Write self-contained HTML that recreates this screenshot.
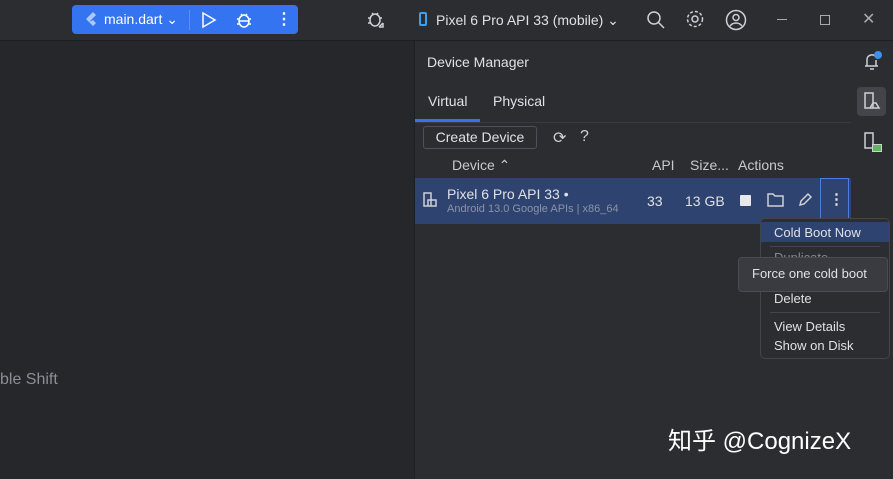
<!DOCTYPE html><html><head><style>
body{margin:0;width:893px;height:479px;background:#26272b;font-family:"Liberation Sans",sans-serif;color:#dfe1e5;position:relative;overflow:hidden;font-size:13px}
.a{position:absolute}
svg{position:absolute;fill:none;stroke:#ced0d6;stroke-width:1.5}
</style></head><body>
<div class="a" style="left:0;top:0;width:893px;height:40px;background:#2b2d30;border-bottom:1px solid #1e1f22"></div>
<div class="a" style="left:72px;top:5px;width:226px;height:29px;background:#3574f0;border-radius:4px"></div>
<svg style="left:84px;top:11px" width="14" height="18" viewBox="0 0 14 18"><path d="M9 1 L2 8 L5 11 L12 4Z M5 11 L9 15 L12 12 L9 9Z" fill="#a9c9ff" stroke="none"/></svg>
<div class="a" style="left:104px;top:11px;color:#fff;font-size:14px">main.dart ⌄</div>
<div class="a" style="left:189px;top:10px;width:1px;height:20px;background:#5f8ff0"></div>
<svg style="left:201px;top:11px" width="16" height="18" viewBox="0 0 16 18"><path d="M2 2 L14 9 L2 16Z" stroke="#fff"/></svg>
<svg style="left:235px;top:11px" width="18" height="18" viewBox="0 0 18 18"><ellipse cx="9" cy="10" rx="5" ry="6" stroke="#fff"/><path d="M2 8h3M13 8h3M2 13h3M13 13h3M6 3l2 2M12 3l-2 2M4 10h10" stroke="#fff"/></svg>
<div class="a" style="left:276px;top:9px;color:#fff;font-size:16px;font-weight:bold">⋮</div>
<svg style="left:366px;top:10px" width="20" height="20" viewBox="0 0 20 20"><ellipse cx="9" cy="10" rx="5" ry="6"/><path d="M2 8h3M13 8h3M2 13h3M6 3l2 2M12 3l-2 2M13 17l4-4M17 13v4h-4"/></svg>
<div class="a" style="left:419px;top:12px;width:8px;height:14px;border:2px solid #3d9ff0;border-radius:2px;box-sizing:border-box"></div>
<div class="a" style="left:436px;top:12px;font-size:14px">Pixel 6 Pro API 33 (mobile) ⌄</div>
<svg style="left:646px;top:10px" width="20" height="20" viewBox="0 0 20 20"><circle cx="8" cy="8" r="6"/><path d="M12.5 12.5 18 18"/></svg>
<svg style="left:685px;top:9px" width="20" height="20" viewBox="0 0 20 20"><circle cx="10" cy="10" r="3"/><circle cx="10" cy="10" r="7.5" stroke-dasharray="3 2"/></svg>
<svg style="left:725px;top:9px" width="22" height="22" viewBox="0 0 22 22"><circle cx="11" cy="11" r="9.5"/><circle cx="11" cy="8.5" r="3"/><path d="M5 17c3-4 9-4 12 0"/></svg>
<div class="a" style="left:777px;top:19px;width:10px;height:1px;background:#aaa"></div>
<div class="a" style="left:820px;top:15px;width:8px;height:8px;border:1px solid #aaa"></div>
<div class="a" style="left:862px;top:9px;color:#aaa;font-size:16px">✕</div>
<div class="a" style="left:0;top:371px;color:#8c8e94;font-size:16px">ble Shift</div>
<div class="a" style="left:414px;top:41px;width:437px;height:438px;background:#2b2d30;border-left:1px solid #1e1f22;border-right:1px solid #1e1f22"></div>
<div class="a" style="left:852px;top:41px;width:41px;height:438px;background:#2b2d30"></div>
<div class="a" style="left:427px;top:54px;font-size:14px">Device Manager</div>
<div class="a" style="left:428px;top:93px;font-size:14px">Virtual</div>
<div class="a" style="left:493px;top:93px;font-size:14px">Physical</div>
<div class="a" style="left:415px;top:119px;width:65px;height:3px;background:#3574f0"></div>
<div class="a" style="left:415px;top:122px;width:436px;height:1px;background:#393b40"></div>
<div class="a" style="left:423px;top:126px;width:114px;height:23px;border:1px solid #4e5157;border-radius:3px;box-sizing:border-box;text-align:center;line-height:21px;font-size:14px">Create Device</div>
<div class="a" style="left:553px;top:128px;font-size:16px;color:#ced0d6">⟳</div>
<div class="a" style="left:580px;top:128px;font-size:16px;color:#ced0d6">?</div>
<div class="a" style="left:452px;top:157px;font-size:14px;color:#c8c9cd">Device ⌃</div>
<div class="a" style="left:652px;top:157px;font-size:14px;color:#c8c9cd">API</div>
<div class="a" style="left:690px;top:157px;font-size:14px;color:#c8c9cd">Size...</div>
<div class="a" style="left:738px;top:157px;font-size:14px;color:#c8c9cd">Actions</div>
<div class="a" style="left:415px;top:178px;width:436px;height:46px;background:#2e4370"></div>
<div class="a" style="left:820px;top:178px;width:29px;height:45px;border:1px solid #4c7de0;box-sizing:border-box"></div>
<svg style="left:422px;top:192px" width="16" height="16" viewBox="0 0 16 16"><path d="M2 1h7v13H2Z M6 8h8v6H6Z"/></svg>
<div class="a" style="left:447px;top:186px;font-size:14px">Pixel 6 Pro API 33 •</div>
<div class="a" style="left:447px;top:203px;font-size:11px;color:#8a93a8">Android 13.0 Google APIs | x86_64</div>
<div class="a" style="left:647px;top:193px;font-size:14px">33</div>
<div class="a" style="left:685px;top:193px;font-size:14px">13 GB</div>
<div class="a" style="left:740px;top:195px;width:11px;height:11px;background:#e8e8ea;border-radius:1px"></div>
<svg style="left:767px;top:192px" width="17" height="15" viewBox="0 0 17 15"><path d="M1 2h5l2 2h8v10H1Z"/></svg>
<svg style="left:797px;top:192px" width="16" height="16" viewBox="0 0 16 16"><path d="M3 13 L4 9 L11 2 L14 5 L7 12Z"/></svg>
<div class="a" style="left:829px;top:190px;font-size:15px;font-weight:bold">⋮</div>
<svg style="left:861px;top:50px" width="22" height="22" viewBox="0 0 22 22"><path d="M4 16h13M6 16V9a5 5 0 0 1 9 -2M15 10v6M9 19h4"/></svg>
<div class="a" style="left:874px;top:51px;width:8px;height:8px;border-radius:50%;background:#3d8ff0"></div>
<div class="a" style="left:857px;top:87px;width:29px;height:29px;background:#43454a;border-radius:4px"></div>
<svg style="left:862px;top:92px" width="20" height="20" viewBox="0 0 20 20"><path d="M3 1h8v15H3Z M8 16l3-5 3 0 3 5Z"/></svg>
<svg style="left:862px;top:132px" width="20" height="20" viewBox="0 0 20 20"><path d="M3 1h8v15H3Z"/></svg>
<div class="a" style="left:872px;top:144px;width:8px;height:6px;background:#5fb85f;border:1px solid #ced0d6"></div>
<div class="a" style="left:760px;top:218px;width:130px;height:141px;background:#2b2d30;border:1px solid #43454a;border-radius:5px;box-sizing:border-box"></div>
<div class="a" style="left:761px;top:222px;width:128px;height:20px;background:#2e4370"></div>
<div class="a" style="left:774px;top:225px;font-size:13px">Cold Boot Now</div>
<div class="a" style="left:770px;top:246px;width:110px;height:1px;background:#43454a"></div>
<div class="a" style="left:774px;top:250px;font-size:13px;color:#888">Duplicate</div>
<div class="a" style="left:738px;top:257px;width:150px;height:35px;background:#393b40;border:1px solid #4a4c51;border-radius:4px;box-sizing:border-box"></div>
<div class="a" style="left:752px;top:266px;font-size:13px">Force one cold boot</div>
<div class="a" style="left:774px;top:291px;font-size:13px">Delete</div>
<div class="a" style="left:770px;top:312px;width:110px;height:1px;background:#43454a"></div>
<div class="a" style="left:774px;top:319px;font-size:13px">View Details</div>
<div class="a" style="left:774px;top:338px;font-size:13px">Show on Disk</div>
<div class="a" style="left:668px;top:421px;font-size:24px;color:#fff;font-family:'Liberation Sans','Noto Sans CJK SC',sans-serif">知乎 @CognizeX</div>
</body></html>
